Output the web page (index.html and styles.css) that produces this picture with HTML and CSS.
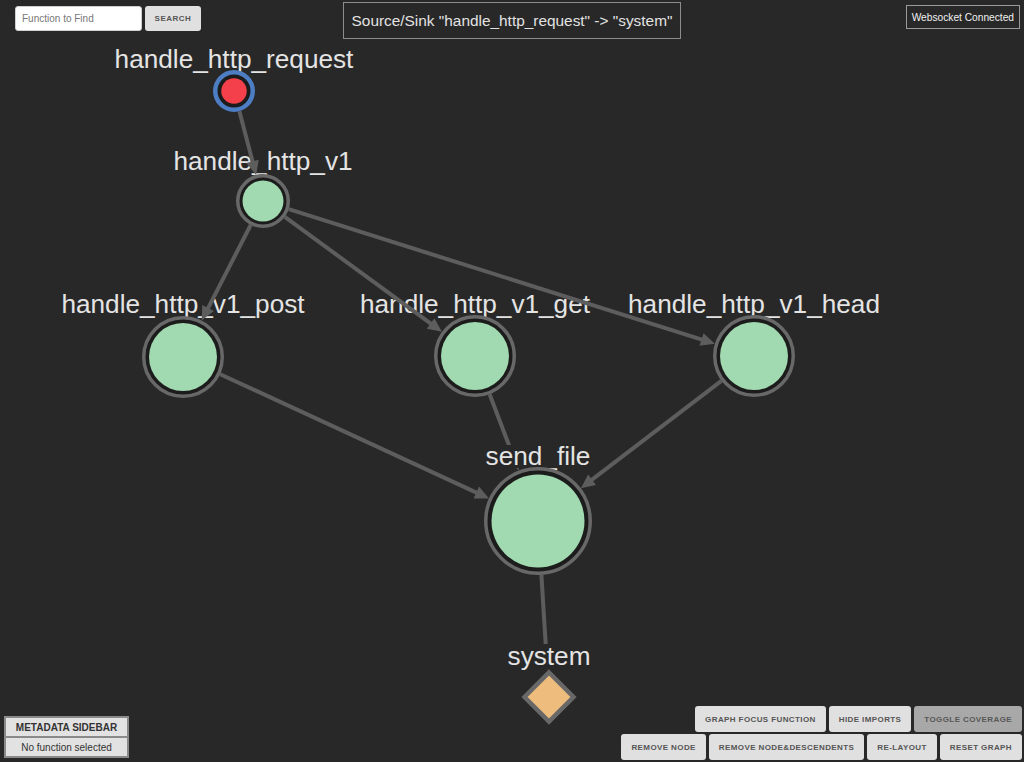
FILE: index.html
```html
<!DOCTYPE html>
<html lang="en">
<head>
<meta charset="utf-8">
<title>Graph</title>
<link rel="stylesheet" href="styles.css">
</head>
<body>
<div class="app">
  <svg class="graph" width="1024" height="762" viewBox="0 0 1024 762" xmlns="http://www.w3.org/2000/svg">
    <g class="labels">
      <text x="234" y="68">handle_http_request</text>
      <text x="263" y="170">handle_http_v1</text>
      <text x="183" y="313">handle_http_v1_post</text>
      <text x="475" y="313">handle_http_v1_get</text>
      <text x="754" y="313">handle_http_v1_head</text>
    </g>
    <g class="edges">
      <line x1="239.4" y1="111.3" x2="253.0" y2="163.3"/>
      <polygon points="256.1,174.9 246.2,163.1 258.8,159.7"/>
      <line x1="250.7" y1="225" x2="207.2" y2="309.8"/>
      <polygon points="201.7,320.5 202.3,305.0 213.9,311.0"/>
      <line x1="284.8" y1="216.9" x2="432.2" y2="324.7"/>
      <polygon points="441.9,331.8 426.8,328.7 434.4,318.3"/>
      <line x1="288.8" y1="209.1" x2="703.4" y2="340.1"/>
      <polygon points="714.9,343.7 699.5,345.7 703.5,333.3"/>
      <line x1="220.2" y1="374.2" x2="478.1" y2="493.4"/>
      <polygon points="489,498.4 473.6,498.4 479.0,486.6"/>
      <line x1="489.6" y1="394.3" x2="514.4" y2="459.4"/>
      <polygon points="518.7,470.6 507.6,459.8 519.8,455.2"/>
      <line x1="721.4" y1="380.9" x2="590.4" y2="480.9"/>
      <polygon points="580.9,488.2 588.1,474.5 595.9,484.9"/>
      <line x1="541.4" y1="574.9" x2="546.6" y2="658.0"/>
      <polygon points="547.3,670 539.9,656.4 552.9,655.6"/>
    </g>
    <g class="labels">
      <rect class="label-bg" x="483" y="445" width="110" height="23"/>
      <text x="538" y="465">send_file</text>
      <rect class="label-bg" x="505" y="644" width="90" height="25"/>
      <text x="549" y="665">system</text>
    </g>
    <g class="nodes">
      <circle class="ring source" cx="234" cy="91" r="18.75"/>
      <circle class="core source" cx="234" cy="91" r="12.75"/>

      <circle class="ring" cx="263" cy="201" r="25.25"/>
      <circle class="core" cx="263" cy="201" r="20.5"/>

      <circle class="ring" cx="183" cy="357" r="39.25"/>
      <circle class="core" cx="183" cy="357" r="34"/>

      <circle class="ring" cx="475" cy="356" r="39.25"/>
      <circle class="core" cx="475" cy="356" r="34"/>

      <circle class="ring" cx="754" cy="356" r="39.25"/>
      <circle class="core" cx="754" cy="356" r="34"/>

      <circle class="ring" cx="538" cy="521" r="52.25"/>
      <circle class="core" cx="538" cy="521" r="46.5"/>

      <polygon class="sink" points="549,672.5 573.5,697 549,721.5 524.5,697"/>
    </g>
  </svg>

  <div class="overlay">
    <div class="topbar">
      <form class="search">
        <input class="search-input" type="text" placeholder="Function to Find">
        <button class="search-btn" type="button">SEARCH</button>
      </form>
      <div class="title">Source/Sink "handle_http_request" -&gt; "system"</div>
      <div class="status">Websocket Connected</div>
    </div>
    <div class="bottombar">
      <div class="sidebar">
        <div class="sidebar-head">METADATA SIDEBAR</div>
        <div class="sidebar-body">No function selected</div>
      </div>
      <div class="actions">
        <div class="row">
          <button class="btn" type="button">GRAPH FOCUS FUNCTION</button>
          <button class="btn" type="button">HIDE IMPORTS</button>
          <button class="btn active" type="button">TOGGLE COVERAGE</button>
        </div>
        <div class="row">
          <button class="btn" type="button">REMOVE NODE</button>
          <button class="btn" type="button">REMOVE NODE&amp;DESCENDENTS</button>
          <button class="btn" type="button">RE-LAYOUT</button>
          <button class="btn" type="button">RESET GRAPH</button>
        </div>
      </div>
    </div>
  </div>
</div>
</body>
</html>
```

FILE: styles.css
```css
* { box-sizing: border-box; }

html, body {
  margin: 0;
  padding: 0;
  background: #282828;
  font-family: "Liberation Sans", Arial, Helvetica, sans-serif;
  overflow: hidden;
}

.app {
  position: relative;
  width: 1024px;
  height: 762px;
}

.graph {
  position: absolute;
  left: 0;
  top: 0;
  display: block;
}

.labels text {
  font-family: "Liberation Sans", Arial, sans-serif;
  font-size: 26.2px;
  fill: #e4e4e4;
  text-anchor: middle;
}

.label-bg { fill: #282828; }

.edges line {
  stroke: #5d5d5d;
  stroke-width: 4;
}

.edges polygon { fill: #5d5d5d; }

.ring {
  fill: #1c1c1c;
  stroke: #686868;
  stroke-width: 3.5;
}

.ring.source {
  stroke: #4d7dc3;
  stroke-width: 4.5;
}

.core { fill: #a1d9b0; }
.core.source { fill: #f4404a; }

.sink {
  fill: #eebd7d;
  stroke: #686868;
  stroke-width: 4.5;
  stroke-linejoin: miter;
}

/* overlay UI */
.overlay {
  position: absolute;
  left: 0;
  top: 0;
  width: 1024px;
  height: 762px;
  display: flex;
  flex-direction: column;
  justify-content: space-between;
}

.topbar {
  display: grid;
  grid-template-columns: 1fr auto 1fr;
  align-items: start;
}

.search {
  display: flex;
  gap: 3px;
  margin: 6px 0 0 15px;
}

.search-input {
  width: 127px;
  height: 25px;
  border: 1px solid #d0d0d0;
  border-radius: 3px;
  background: #fff;
  padding: 0 6px;
  font-family: "Liberation Sans", Arial, sans-serif;
  font-size: 10px;
  color: #333;
}

.search-input::placeholder { color: #777; }

.search-btn {
  width: 56px;
  height: 25px;
  border: none;
  border-radius: 3px;
  background: #e0e0e0;
  font-family: "Liberation Sans", Arial, sans-serif;
  font-size: 8px;
  font-weight: bold;
  letter-spacing: 0.5px;
  color: #555;
  padding: 0;
}

.title {
  margin-top: 2px;
  height: 37px;
  padding: 1px 8px 0;
  border: 1px solid #8c8c8c;
  display: flex;
  align-items: center;
  font-size: 15.4px;
  color: #e2e2e2;
  white-space: nowrap;
}

.status {
  justify-self: end;
  margin: 5px 4px 0 0;
  height: 24px;
  padding: 0 5px;
  border: 1px solid #9a9a9a;
  display: flex;
  align-items: center;
  font-size: 10.2px;
  color: #f0f0f0;
  white-space: nowrap;
}

.bottombar {
  display: flex;
  justify-content: space-between;
  align-items: flex-end;
}

.sidebar {
  margin: 0 0 4px 4px;
  width: 125px;
  border: 2px solid #8a8a8a;
  background: #8a8a8a;
  display: flex;
  flex-direction: column;
  gap: 2px;
}

.sidebar-head,
.sidebar-body {
  background: #e2e2e2;
  display: flex;
  align-items: center;
  justify-content: center;
  font-size: 10px;
  color: #333;
  white-space: nowrap;
}

.sidebar-head {
  height: 18px;
  font-weight: bold;
}

.sidebar-body { height: 18px; }

.actions {
  display: flex;
  flex-direction: column;
  align-items: flex-end;
  gap: 2px;
  margin: 0 2px 2px 0;
}

.row {
  display: flex;
  gap: 3px;
}

.btn {
  height: 26px;
  padding: 0 10px;
  border: none;
  border-radius: 3px;
  background: #e0e0e0;
  font-family: "Liberation Sans", Arial, sans-serif;
  font-size: 8px;
  font-weight: bold;
  letter-spacing: 0.4px;
  color: #555;
  white-space: nowrap;
}

.btn.active {
  background: #a8a8a8;
  color: #575757;
}
```
